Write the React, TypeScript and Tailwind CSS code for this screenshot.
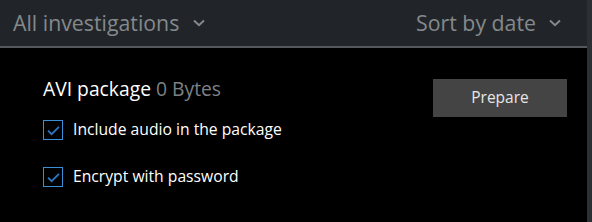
function Chevron() {
  return (
    <svg viewBox="0 0 12 8" className="h-[8px] w-[12px]" fill="none">
      <path d="M1 1.5 L6 6.2 L11 1.5" stroke="currentColor" strokeWidth="2" />
    </svg>
  )
}

function CheckRow({ label }: { label: string }) {
  return (
    <label className="flex h-[20px] items-center gap-[10px]">
      <span className="flex h-[20px] w-[20px] shrink-0 items-center justify-center border border-[#3b8fd9]">
        <svg viewBox="0 0 16 16" className="h-[15px] w-[15px]" fill="none">
          <path d="M2.2 8.2 L6 12 L13.8 4.2" stroke="#2f74bd" strokeWidth="2" />
        </svg>
      </span>
      <span className="text-[15.7px] text-white">{label}</span>
    </label>
  )
}

export default function App() {
  return (
    <div className="flex h-[222px] w-[592px] bg-black" style={{ fontFamily: '"Open Sans", sans-serif' }}>
      <div className="flex min-w-0 flex-1 flex-col">
        <header className="flex h-[48px] shrink-0 items-center justify-between border-b-2 border-[#54595d] bg-[#212529] pl-[13px] pr-[26px] text-[21.3px] text-[#85898c]">
          <div className="flex items-center gap-[14px]">
            <span>All investigations</span>
            <Chevron />
          </div>
          <div className="flex items-center gap-[13px]">
            <span>Sort by date</span>
            <Chevron />
          </div>
        </header>
        <div className="flex items-start justify-between pl-[43px] pr-[20px] pt-[28px]">
          <div className="flex flex-col">
            <div className="text-[19.3px] leading-[26px] text-white">
              AVI package <span className="text-[#7d8185]">0 Bytes</span>
            </div>
            <div className="mt-[18px] flex flex-col gap-[27px]">
              <CheckRow label="Include audio in the package" />
              <CheckRow label="Encrypt with password" />
            </div>
          </div>
          <button className="mt-[3px] h-[38px] w-[134px] bg-[#444444] text-[15.5px] text-[#e6e6e6]">Prepare</button>
        </div>
      </div>
      <div className="w-[5px] bg-[#2b3035]" />
    </div>
  )
}
